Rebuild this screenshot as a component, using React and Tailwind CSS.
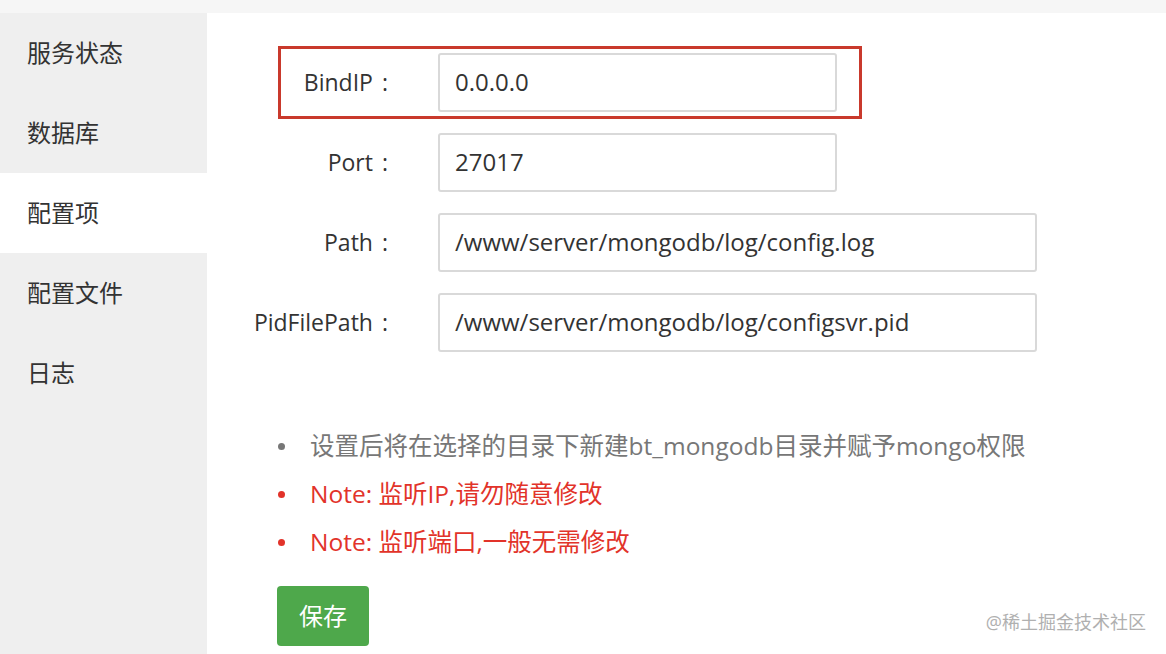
import React from 'react';

const menu = ['服务状态', '数据库', '配置项', '配置文件', '日志'];

const fields = [
  { label: 'BindIP', value: '0.0.0.0', wide: false, mark: true },
  { label: 'Port', value: '27017', wide: false },
  { label: 'Path', value: '/www/server/mongodb/log/config.log', wide: true },
  { label: 'PidFilePath', value: '/www/server/mongodb/log/configsvr.pid', wide: true },
];

const notes = [
  { text: '设置后将在选择的目录下新建bt_mongodb目录并赋予mongo权限', red: false },
  { text: 'Note: 监听IP,请勿随意修改', red: true },
  { text: 'Note: 监听端口,一般无需修改', red: true },
];

const Label = ({ text, className }) => (
  <div className={`shrink-0 text-right text-[23px] text-[#333] whitespace-nowrap ${className}`}>
    {text}<span className="ml-[9px]">:</span>
  </div>
);

const Input = ({ value, wide }) => (
  <div
    className={`ml-[50px] h-[59px] border-2 border-[#d9d9d9] rounded-[3px] flex items-center pl-[15px] text-[24px] text-[#333] shrink-0 ${wide ? 'w-[599px]' : 'w-[399px]'}`}
  >
    {value}
  </div>
);

const FieldRow = ({ f }) => {
  if (f.mark) {
    return (
      <div className="h-[80px] flex items-center">
        <div className="ml-[28px] w-[584px] h-[73px] border-[3px] border-[#c9392c] flex items-center">
          <Label text={f.label} className="w-[107px]" />
          <Input value={f.value} wide={f.wide} />
        </div>
      </div>
    );
  }
  return (
    <div className="h-[80px] flex items-center">
      <Label text={f.label} className="w-[138px]" />
      <Input value={f.value} wide={f.wide} />
    </div>
  );
};

export default function App() {
  return (
    <div
      className="w-[1166px] h-[654px] bg-[#f6f6f6] flex flex-col overflow-hidden relative"
      style={{ fontFamily: '"Open Sans", "Noto Sans CJK SC", sans-serif' }}
    >
      <div className="h-[13px] shrink-0" />
      <div className="flex flex-1">
        <aside className="w-[207px] bg-[#efefef] shrink-0">
          {menu.map((m, i) => (
            <div
              key={m}
              className={`h-[80px] flex items-center pl-[27px] text-[24px] text-[#333] ${i === 2 ? 'bg-white' : ''}`}
            >
              {m}
            </div>
          ))}
        </aside>
        <main className="flex-1 bg-white pl-[43px] pt-[29px]">
          {fields.map((f) => (
            <FieldRow key={f.label} f={f} />
          ))}
          <ul className="mt-[68px] flex flex-col gap-[16px]">
            {notes.map((n) => (
              <li
                key={n.text}
                className={`h-[32px] flex items-center text-[24.5px] ${n.red ? 'text-[#e2332a]' : 'text-[#777]'}`}
              >
                <span className="w-[7px] h-[7px] rounded-full bg-current ml-[28px] mr-[25px] shrink-0" />
                {n.text}
              </li>
            ))}
          </ul>
          <button className="mt-[28px] ml-[27px] w-[92px] h-[60px] bg-[#4ea84b] rounded-[4px] text-white text-[24px]">
            保存
          </button>
        </main>
      </div>
      <div className="absolute right-[20px] bottom-[18px] text-[18px] text-[#b0b0b0]">
        @稀土掘金技术社区
      </div>
    </div>
  );
}
